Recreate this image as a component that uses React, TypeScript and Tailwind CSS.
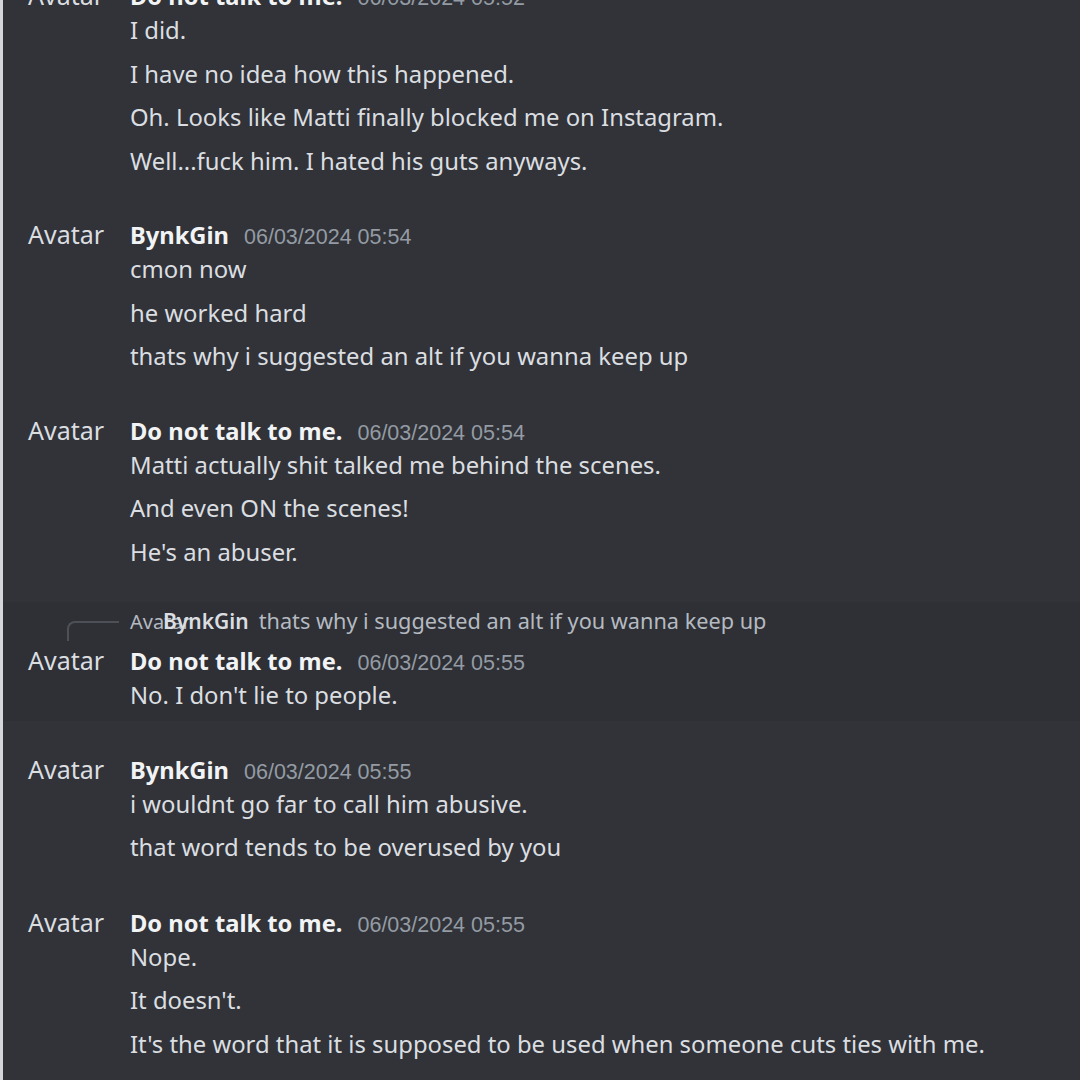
type Group = {
  name: string;
  time: string;
  lines: string[];
  reply?: { name: string; text: string };
};

const groups: Group[] = [
  {
    name: "Do not talk to me.",
    time: "06/03/2024 05:52",
    lines: [
      "I did.",
      "I have no idea how this happened.",
      "Oh. Looks like Matti finally blocked me on Instagram.",
      "Well...fuck him. I hated his guts anyways.",
    ],
  },
  {
    name: "BynkGin",
    time: "06/03/2024 05:54",
    lines: ["cmon now", "he worked hard", "thats why i suggested an alt if you wanna keep up"],
  },
  {
    name: "Do not talk to me.",
    time: "06/03/2024 05:54",
    lines: [
      "Matti actually shit talked me behind the scenes.",
      "And even ON the scenes!",
      "He's an abuser.",
    ],
  },
  {
    name: "Do not talk to me.",
    time: "06/03/2024 05:55",
    lines: ["No. I don't lie to people."],
    reply: { name: "BynkGin", text: "thats why i suggested an alt if you wanna keep up" },
  },
  {
    name: "BynkGin",
    time: "06/03/2024 05:55",
    lines: ["i wouldnt go far to call him abusive.", "that word tends to be overused by you"],
  },
  {
    name: "Do not talk to me.",
    time: "06/03/2024 05:55",
    lines: [
      "Nope.",
      "It doesn't.",
      "It's the word that it is supposed to be used when someone cuts ties with me.",
    ],
  },
];

const sans = "font-['Noto_Sans',sans-serif]";

// quoted message strip above a reply
function ReplyBar({ name, text }: { name: string; text: string }) {
  return (
    <div className="flex h-[38px] items-center">
      <div className="ml-[64px] mt-[19px] h-[20px] w-[52px] shrink-0 self-start rounded-tl-[8px] border-l-2 border-t-2 border-[#4e5058]" />
      <div className="ml-[11px] flex items-baseline whitespace-nowrap">
        <span className="inline-block w-[33px] overflow-visible text-[20px] text-[#b5bac1]">Avatar</span>
        <span className="text-[21px] font-semibold text-[#dbdee1]">{name}</span>
        <span className="ml-[10px] text-[21.7px] text-[#b5bac1]">{text}</span>
      </div>
    </div>
  );
}

function Message({ g }: { g: Group }) {
  return (
    <div>
      <div className="flex h-[28px] items-baseline">
        <span className="w-[127px] shrink-0 pl-[25px] text-[25px] leading-[28px] text-[#dbdee1]">Avatar</span>
        <span className="text-[23.7px] font-bold leading-[28px] text-[#f2f3f5]">{g.name}</span>
        <span className="ml-[15px] font-['Liberation_Sans',sans-serif] text-[21.5px] text-[#949ba4]">{g.time}</span>
      </div>
      {g.lines.map((line, i) => (
        <p key={i} className="ml-[127px] text-[23.85px] leading-[43.5px] text-[#dbdee1]">
          {line}
        </p>
      ))}
    </div>
  );
}

export default function App() {
  return (
    <div className={`h-[1080px] overflow-hidden border-l-[3px] border-[#d4d6da] bg-[#313338] ${sans}`}>
      <div className="-mt-[19px] flex flex-col">
        <Message g={groups[0]} />
        <div className="mt-[37px]">
          <Message g={groups[1]} />
        </div>
        <div className="mt-[37px]">
          <Message g={groups[2]} />
        </div>
        <div className="mt-[28px] bg-[#2e3035] pb-[3px]">
          <ReplyBar name={groups[3].reply!.name} text={groups[3].reply!.text} />
          <div className="mt-[6px]">
            <Message g={groups[3]} />
          </div>
        </div>
        <div className="mt-[34px]">
          <Message g={groups[4]} />
        </div>
        <div className="mt-[38px]">
          <Message g={groups[5]} />
        </div>
      </div>
    </div>
  );
}
